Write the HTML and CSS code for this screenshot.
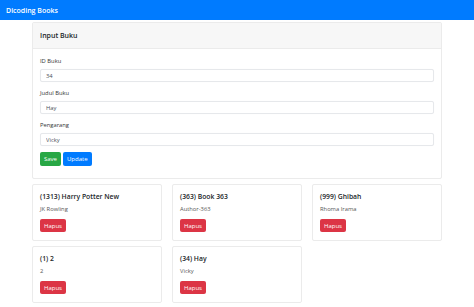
FILE: index.html
```html
<!DOCTYPE html>
<html lang="en">
<head>
    <meta charset="UTF-8">
    <meta name="viewport" content="width=device-width, initial-scale=1.0">
    <title>Dicoding Books</title>
    <link rel="stylesheet" href="styles.css">
</head>
<body>
    <nav class="navbar">
        <a href="#" class="brand">Dicoding Books</a>
    </nav>

    <div class="container">
        <div class="card">
            <div class="card-header">Input Buku</div>
            <div class="card-body">
                <div class="form-group">
                    <label for="inputBookId">ID Buku</label>
                    <input type="text" id="inputBookId" class="form-control" value="34">
                </div>
                <div class="form-group">
                    <label for="inputBookTitle">Judul Buku</label>
                    <input type="text" id="inputBookTitle" class="form-control" value="Hay">
                </div>
                <div class="form-group">
                    <label for="inputBookAuthor">Pengarang</label>
                    <input type="text" id="inputBookAuthor" class="form-control" value="Vicky">
                </div>
                <div class="actions">
                    <button class="btn btn-success">Save</button>
                    <button class="btn btn-primary">Update</button>
                </div>
            </div>
        </div>

        <div class="book-list">
            <div class="card book">
                <h5 class="book-title">(1313) Harry Potter New</h5>
                <p class="book-author">JK Rowling</p>
                <button class="btn btn-danger">Hapus</button>
            </div>
            <div class="card book">
                <h5 class="book-title">(363) Book 363</h5>
                <p class="book-author">Author-363</p>
                <button class="btn btn-danger">Hapus</button>
            </div>
            <div class="card book">
                <h5 class="book-title">(999) Ghibah</h5>
                <p class="book-author">Rhoma Irama</p>
                <button class="btn btn-danger">Hapus</button>
            </div>
            <div class="card book">
                <h5 class="book-title">(1) 2</h5>
                <p class="book-author">2</p>
                <button class="btn btn-danger">Hapus</button>
            </div>
            <div class="card book">
                <h5 class="book-title">(34) Hay</h5>
                <p class="book-author">Vicky</p>
                <button class="btn btn-danger">Hapus</button>
            </div>
        </div>
    </div>
</body>
</html>
```

FILE: styles.css
```css
body {
    margin: 0;
    font-family: "Open Sans", "Noto Sans", sans-serif;
    color: #212529;
    background-color: #fff;
}

.navbar {
    height: 20px;
    display: flex;
    align-items: center;
    padding: 0 6px;
    background-color: #007bff;
    margin-bottom: 2px;
}

    .navbar .brand {
        color: #fff;
        font-size: 7px;
        font-weight: 600;
        text-decoration: none;
    }

.container {
    width: 410px;
    margin: 0 auto;
}

.card {
    border: 1px solid #ebebeb;
    border-radius: 2px;
    background-color: #fff;
}

.card-header {
    height: 25px;
    display: flex;
    align-items: center;
    padding: 0 7px;
    background-color: #f7f7f7;
    border-bottom: 1px solid #ebebeb;
    font-size: 7px;
    font-weight: 600;
}

.card-body {
    padding: 7px 7px 12px;
}

.form-group {
    margin-bottom: 6px;
}

    .form-group label {
        display: block;
        font-size: 5.8px;
        line-height: 10px;
        margin-bottom: 3px;
        color: #333;
    }

.form-control {
    display: block;
    box-sizing: border-box;
    width: 100%;
    height: 13px;
    padding: 0 5px;
    font-family: inherit;
    font-size: 5.8px;
    color: #495057;
    border: 1px solid #e6e8eb;
    border-radius: 2px;
    box-shadow: 0 0 1px rgba(0, 0, 0, 0.04);
}

.actions {
    display: flex;
    gap: 2px;
}

.btn {
    height: 14px;
    padding: 0 4px;
    font-family: inherit;
    font-size: 6px;
    color: #fff;
    border: none;
    border-radius: 2px;
}

.btn-success {
    background-color: #28a745;
}

.btn-primary {
    background-color: #007bff;
}

.btn-danger {
    background-color: #dc3545;
    height: 13px;
    margin-top: 5px;
}

.book-list {
    display: grid;
    grid-template-columns: repeat(3, 1fr);
    column-gap: 10px;
    row-gap: 5px;
    margin-top: 5px;
}

.book {
    display: flex;
    flex-direction: column;
    align-items: flex-start;
    padding: 7px 7px 8px;
}

.book-title {
    margin: 0;
    font-size: 6.8px;
    font-weight: 600;
    line-height: 10px;
}

.book-author {
    margin: 2px 0 0;
    font-size: 5.8px;
    line-height: 10px;
    color: #555;
}
```
